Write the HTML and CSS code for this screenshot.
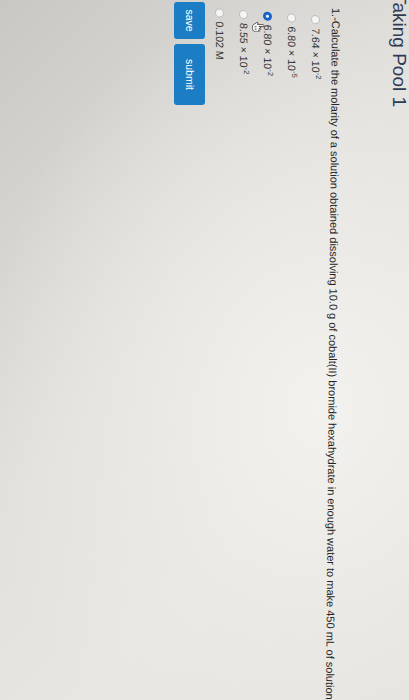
FILE: index.html
```html
<!DOCTYPE html>
<html lang="en">
<head>
<meta charset="utf-8">
<title>Taking Pool 1</title>
<link rel="stylesheet" href="styles.css">
</head>
<body>
<div class="page">
  <h1 class="title">Taking Pool 1</h1>
  <div class="question">
    <p class="stem">1.-Calculate the molarity of a solution obtained dissolving 10.0 g of cobalt(II) bromide hexahydrate in enough water to make 450 mL of solution</p>
    <ul class="options">
      <li class="option"><span class="radio"></span><span class="label">7.64 × 10<sup>-2</sup></span></li>
      <li class="option"><span class="radio"></span><span class="label">6.80 × 10<sup>-5</sup></span></li>
      <li class="option is-selected"><span class="radio"></span><span class="label">6.80 × 10<sup>-2</sup></span>
        <svg class="cursor" viewBox="0 0 16 20" width="11" height="13" aria-hidden="true">
          <path d="M6 1.5c.8 0 1.5.7 1.5 1.5v6h.5V7.8c0-.8.6-1.3 1.3-1.3s1.3.6 1.3 1.3V9h.4v-.6c0-.7.6-1.2 1.2-1.2s1.3.6 1.3 1.3V10h.3c0-.7.5-1.1 1.1-1.1.7 0 1.2.5 1.2 1.2v4.4c0 2.8-2 4.9-4.8 4.9H9c-1.800 0-3-.8-4-2.300L1.6 12.3c-.4-.6-.3-1.3.3-1.7.5-.4 1.3-.3 1.7.2L4.5 12V3c0-.8.7-1.5 1.5-1.5z" fill="#fff" stroke="#222" stroke-width="1.1" stroke-linejoin="round"/>
          <path d="M8 13v3M10.5 13v3M13 13v3" stroke="#222" stroke-width="0.9" fill="none"/>
        </svg>
      </li>
      <li class="option"><span class="radio"></span><span class="label">8.55 × 10<sup>-2</sup></span></li>
      <li class="option"><span class="radio"></span><span class="label">0.102 M</span></li>
    </ul>
    <div class="actions">
      <button class="btn btn-save" type="button">save</button>
      <button class="btn btn-submit" type="button">submit</button>
    </div>
  </div>
</div>
</body>
</html>
```
FILE: styles.css
```css
html, body {
  margin: 0;
  padding: 0;
  width: 409px;
  height: 700px;
  overflow: hidden;
}

body {
  font-family: "Liberation Sans", Arial, Helvetica, sans-serif;
  background:
    radial-gradient(ellipse 420px 520px at 78% 58%, rgba(243,242,238,0.95) 0%, rgba(237,235,231,0.6) 45%, rgba(237,235,231,0) 80%),
    linear-gradient(135deg, #c9c7c3 0%, #d6d4d0 22%, #e2e0dc 45%, #e8e6e2 70%, #e4e2de 100%);
}

/* the photographed screen is turned a quarter turn */
.page {
  width: 700px;
  height: 409px;
  transform-origin: 0 0;
  transform: translateX(409px) rotate(90deg);
  color: #2e2e2e;
}

.title {
  margin: -2px 0 0 -5px;
  font-size: 19px;
  line-height: 20px;
  font-weight: normal;
  color: #2d3b54;
  white-space: nowrap;
}

.question {
  display: flex;
  flex-direction: column;
  align-items: flex-start;
}

.stem {
  margin: 47px 0 0 10px;
  font-size: 11px;
  line-height: 13px;
  white-space: nowrap;
  color: #262626;
  transform-origin: 0 50%;
  transform: rotate(0.5deg);
}

.options {
  list-style: none;
  margin: 1px 0 0 0;
  padding: 0 0 0 18px;
  transform-origin: 0 0;
  transform: skewX(-4deg);
}

.option {
  position: relative;
  display: flex;
  align-items: center;
  height: 24px;
  font-size: 10.6px;
  color: #333;
}

.radio {
  box-sizing: border-box;
  width: 9px;
  height: 9px;
  margin-right: 4px;
  border-radius: 50%;
  border: 1px solid #bcbcbc;
  background: #f4f4f3;
  flex: none;
}

.is-selected .radio {
  border: 3px solid #1962c9;
  background: #fff;
}

.label sup {
  font-size: 0.7em;
  line-height: 0;
  vertical-align: 0.55em;
}

.cursor {
  position: absolute;
  left: 10px;
  top: 15px;
}

.actions {
  display: flex;
  gap: 5px;
  margin: 3px 0 0 4px;
}

.btn {
  height: 31px;
  border: 0;
  border-radius: 3px;
  background: #1b7dc3;
  color: #fff;
  font-family: "Liberation Sans", Arial, Helvetica, sans-serif;
  font-size: 10.5px;
  line-height: 31px;
  padding: 0;
  text-align: center;
}

.btn-save {
  width: 37px;
}

.btn-submit {
  width: 61px;
}
```
